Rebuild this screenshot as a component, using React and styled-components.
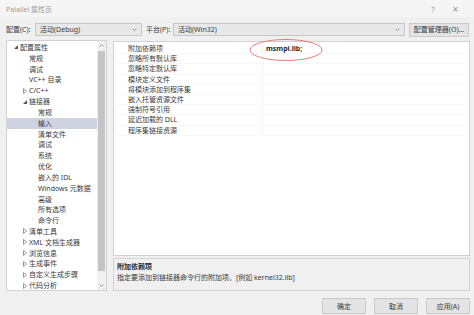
import React from 'react';
import styled, { createGlobalStyle } from 'styled-components';

const GlobalStyle = createGlobalStyle`
  html, body {
    margin: 0;
    padding: 0;
    background: #f0f0f0;
  }
  body {
    font-family: "Noto Sans", "Noto Sans CJK SC", sans-serif;
    font-size: 7px;
    color: #3a3a3a;
  }
`;

const treeItems = [
  { label: '配置属性', level: 0, expander: 'open' },
  { label: '常规', level: 1 },
  { label: '调试', level: 1 },
  { label: 'VC++ 目录', level: 1 },
  { label: 'C/C++', level: 1, expander: 'closed' },
  { label: '链接器', level: 1, expander: 'open' },
  { label: '常规', level: 2 },
  { label: '输入', level: 2, selected: true },
  { label: '清单文件', level: 2 },
  { label: '调试', level: 2 },
  { label: '系统', level: 2 },
  { label: '优化', level: 2 },
  { label: '嵌入的 IDL', level: 2 },
  { label: 'Windows 元数据', level: 2 },
  { label: '高级', level: 2 },
  { label: '所有选项', level: 2 },
  { label: '命令行', level: 2 },
  { label: '清单工具', level: 1, expander: 'closed' },
  { label: 'XML 文档生成器', level: 1, expander: 'closed' },
  { label: '浏览信息', level: 1, expander: 'closed' },
  { label: '生成事件', level: 1, expander: 'closed' },
  { label: '自定义生成步骤', level: 1, expander: 'closed' },
  { label: '代码分析', level: 1, expander: 'closed' },
];

const props = [
  { name: '附加依赖项', value: 'msmpi.lib;' },
  { name: '忽略所有默认库' },
  { name: '忽略特定默认库' },
  { name: '模块定义文件' },
  { name: '将模块添加到程序集' },
  { name: '嵌入托管资源文件' },
  { name: '强制符号引用' },
  { name: '延迟加载的 DLL' },
  { name: '程序集链接资源' },
];

const Window = styled.div`
  width: 474px;
  height: 315px;
  display: flex;
  flex-direction: column;
  background: #f0f0f0;
  overflow: hidden;
`;

const TitleBar = styled.div`
  height: 17px;
  display: flex;
  align-items: center;
  padding: 1px 8px 0 6px;
  box-sizing: border-box;
  background: #f5f5f5;
  color: #9a9a9a;
  line-height: 1;
`;

const Title = styled.span`
  flex: 1;
`;

const TitleButton = styled.span`
  width: 22px;
  text-align: center;
  color: #959595;
  font-size: ${p => p.$size || 7}px;
`;

const ConfigRow = styled.div`
  height: 15px;
  margin-top: 5px;
  display: flex;
  align-items: center;
  padding-left: 6px;
`;

const Label = styled.span`
  width: ${p => p.$w}px;
  line-height: 1;
`;

const Combo = styled.div`
  width: ${p => p.$w}px;
  height: 13px;
  box-sizing: border-box;
  border: 1px solid #c6c6c6;
  background: #e8e8e8;
  display: flex;
  align-items: center;
  padding: 0 4px 0 4px;
  margin-right: ${p => p.$mr || 0}px;
  line-height: 1;
`;

const ComboText = styled.span`
  flex: 1;
`;

const Button = styled.div`
  width: ${p => p.$w}px;
  height: ${p => p.$h || 14}px;
  box-sizing: border-box;
  border: 1px solid #cacaca;
  background: #e4e4e4;
  display: flex;
  align-items: center;
  justify-content: center;
  line-height: 1;
  color: #3a3a3a;
`;

const Main = styled.div`
  display: flex;
  gap: 6px;
  margin-top: 3px;
  padding-left: 6px;
  height: 251px;
`;

const TreePanel = styled.div`
  width: 101px;
  box-sizing: border-box;
  border: 1px solid #d2d2d2;
  background: #fff;
  display: flex;
`;

const TreeList = styled.div`
  flex: 1;
  padding-top: 1px;
`;

const TreeRow = styled.div`
  height: 10.83px;
  display: flex;
  align-items: center;
  padding-left: ${p => 4 + p.$level * 9}px;
  background: ${p => (p.$selected ? '#cfd2e0' : 'transparent')};
  line-height: 1;
  white-space: nowrap;
`;

const Expander = styled.span`
  width: 9px;
  display: flex;
  align-items: center;
  justify-content: center;
`;

const Scrollbar = styled.div`
  width: 9px;
  background: #f0f0f0;
  display: flex;
  flex-direction: column;
  align-items: center;
`;

const ScrollArrow = styled.div`
  height: 9px;
  display: flex;
  align-items: center;
  justify-content: center;
`;

const ScrollTrack = styled.div`
  flex: 1;
  width: 100%;
  display: flex;
  flex-direction: column;
  padding: 1px 1px 10px;
  box-sizing: border-box;
`;

const Thumb = styled.div`
  flex: 1;
  background: #c4c4c4;
`;

const RightColumn = styled.div`
  width: 357px;
  display: flex;
  flex-direction: column;
  gap: 2px;
`;

const Grid = styled.div`
  flex: 1;
  box-sizing: border-box;
  border: 1px solid #d2d2d2;
  background: #fff;
  padding-top: 2px;
  margin-top: 1px;
`;

const GridRow = styled.div`
  height: 10.2px;
  display: flex;
  align-items: center;
  line-height: 1;
  border-bottom: 1px solid #f8f8f8;
  box-sizing: border-box;
`;

const NameCell = styled.div`
  width: 149px;
  padding-left: 14px;
  box-sizing: border-box;
  border-right: 1px solid #f3f3f3;
  height: 100%;
  display: flex;
  align-items: center;
`;

const ValueCell = styled.div`
  flex: 1;
  padding-left: 3px;
  position: relative;
  font-weight: bold;
  color: #2a2a2a;
  height: 100%;
  display: flex;
  align-items: center;
`;

const Ellipse = styled.svg`
  position: absolute;
  left: -14px;
  top: -5px;
  overflow: visible;
`;

const Description = styled.div`
  height: 33px;
  box-sizing: border-box;
  border: 1px solid #d2d2d2;
  background: #f0f0f0;
  padding: 4px 3px 0;
  display: flex;
  flex-direction: column;
  gap: 4px;
  line-height: 1;
`;

const DescTitle = styled.div`
  font-weight: bold;
  color: #2a2a2a;
`;

const Footer = styled.div`
  display: flex;
  justify-content: flex-end;
  gap: 8px;
  padding: 7px 4px 0 0;
`;

const OpenArrow = () => (
  <svg width="4" height="4" viewBox="0 0 4 4">
    <path d="M4 0 L4 4 L0 4 Z" fill="#555" />
  </svg>
);

const ClosedArrow = () => (
  <svg width="4" height="6" viewBox="0 0 4 6">
    <path d="M0.5 0.5 L3.5 3 L0.5 5.5 Z" fill="none" stroke="#808080" strokeWidth="0.8" />
  </svg>
);

const Chevron = ({ up }) => (
  <svg width="5" height="3" viewBox="0 0 5 3">
    <path d={up ? 'M0.5 2.5 L2.5 0.5 L4.5 2.5' : 'M0.5 0.5 L2.5 2.5 L4.5 0.5'} fill="none" stroke="#808080" strokeWidth="0.8" />
  </svg>
);

const App = () => {
  return (
    <Window>
      <GlobalStyle />
      <TitleBar>
        <Title>Paiallel 属性页</Title>
        <TitleButton>?</TitleButton>
        <TitleButton $size={8}>✕</TitleButton>
      </TitleBar>

      <ConfigRow>
        <Label $w={29}>配置(C):</Label>
        <Combo $w={107} $mr={4}>
          <ComboText>活动(Debug)</ComboText>
          <Chevron />
        </Combo>
        <Label $w={27}>平台(P):</Label>
        <Combo $w={232} $mr={4}>
          <ComboText>活动(Win32)</ComboText>
          <Chevron />
        </Combo>
        <Button $w={60}>配置管理器(O)...</Button>
      </ConfigRow>

      <Main>
        <TreePanel>
          <TreeList>
            {treeItems.map((item, i) => (
              <TreeRow key={i} $level={item.level} $selected={item.selected}>
                <Expander>
                  {item.expander === 'open' && <OpenArrow />}
                  {item.expander === 'closed' && <ClosedArrow />}
                </Expander>
                {item.label}
              </TreeRow>
            ))}
          </TreeList>
          <Scrollbar>
            <ScrollArrow><Chevron up /></ScrollArrow>
            <ScrollTrack><Thumb /></ScrollTrack>
            <ScrollArrow><Chevron /></ScrollArrow>
          </Scrollbar>
        </TreePanel>

        <RightColumn>
          <Grid>
            {props.map((p, i) => (
              <GridRow key={i}>
                <NameCell>{p.name}</NameCell>
                <ValueCell>
                  {p.value}
                  {p.value && (
                    <Ellipse width="74" height="22">
                      <ellipse cx="37" cy="11" rx="36" ry="10.5" fill="none" stroke="#e07070" strokeWidth="0.9" />
                    </Ellipse>
                  )}
                </ValueCell>
              </GridRow>
            ))}
          </Grid>
          <Description>
            <DescTitle>附加依赖项</DescTitle>
            <div>指定要添加到链接器命令行的附加项。[例如 kernel32.lib]</div>
          </Description>
        </RightColumn>
      </Main>

      <Footer>
        <Button $w={44} $h={16}>确定</Button>
        <Button $w={44} $h={16}>取消</Button>
        <Button $w={44} $h={16}>应用(A)</Button>
      </Footer>
    </Window>
  );
};

export default App;
